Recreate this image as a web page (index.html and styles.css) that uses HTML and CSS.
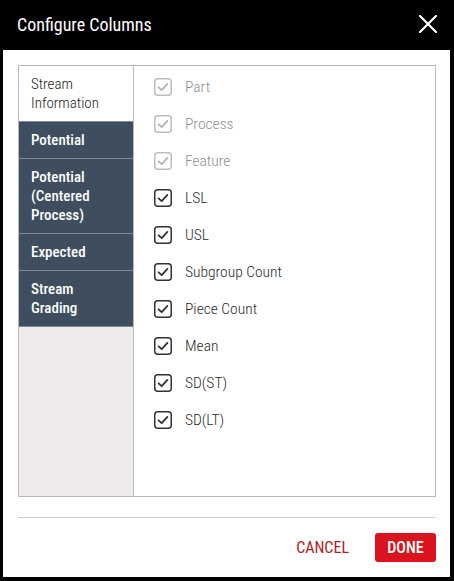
FILE: index.html
```html
<!DOCTYPE html>
<html>
<head>
<meta charset="utf-8">
<link rel="stylesheet" href="styles.css">
</head>
<body>
<div class="dialog">
  <div class="header">
    <div class="title">Configure Columns</div>
    <svg class="close" width="18" height="18" viewBox="0 0 18 18"><path d="M1 1 L17 17 M17 1 L1 17" stroke="#fff" stroke-width="2.2" stroke-linecap="square"/></svg>
  </div>
  <div class="body">
    <div class="panel">
      <div class="sidebar">
        <div class="tab active">Stream<br>Information</div>
        <div class="tab">Potential</div>
        <div class="tab">Potential<br>(Centered<br>Process)</div>
        <div class="tab">Expected</div>
        <div class="tab">Stream<br>Grading</div>
      </div>
      <div class="content">
        <div class="row disabled"><svg class="cb" width="18" height="18" viewBox="0 0 18 18"><rect x="0.75" y="0.75" width="16.5" height="16.5" rx="3"/><path d="M4.6 9.3 L7.7 12.2 L13.4 5.9"/></svg><span>Part</span></div>
        <div class="row disabled"><svg class="cb" width="18" height="18" viewBox="0 0 18 18"><rect x="0.75" y="0.75" width="16.5" height="16.5" rx="3"/><path d="M4.6 9.3 L7.7 12.2 L13.4 5.9"/></svg><span>Process</span></div>
        <div class="row disabled"><svg class="cb" width="18" height="18" viewBox="0 0 18 18"><rect x="0.75" y="0.75" width="16.5" height="16.5" rx="3"/><path d="M4.6 9.3 L7.7 12.2 L13.4 5.9"/></svg><span>Feature</span></div>
        <div class="row"><svg class="cb" width="18" height="18" viewBox="0 0 18 18"><rect x="0.75" y="0.75" width="16.5" height="16.5" rx="3"/><path d="M4.6 9.3 L7.7 12.2 L13.4 5.9"/></svg><span>LSL</span></div>
        <div class="row"><svg class="cb" width="18" height="18" viewBox="0 0 18 18"><rect x="0.75" y="0.75" width="16.5" height="16.5" rx="3"/><path d="M4.6 9.3 L7.7 12.2 L13.4 5.9"/></svg><span>USL</span></div>
        <div class="row"><svg class="cb" width="18" height="18" viewBox="0 0 18 18"><rect x="0.75" y="0.75" width="16.5" height="16.5" rx="3"/><path d="M4.6 9.3 L7.7 12.2 L13.4 5.9"/></svg><span>Subgroup Count</span></div>
        <div class="row"><svg class="cb" width="18" height="18" viewBox="0 0 18 18"><rect x="0.75" y="0.75" width="16.5" height="16.5" rx="3"/><path d="M4.6 9.3 L7.7 12.2 L13.4 5.9"/></svg><span>Piece Count</span></div>
        <div class="row"><svg class="cb" width="18" height="18" viewBox="0 0 18 18"><rect x="0.75" y="0.75" width="16.5" height="16.5" rx="3"/><path d="M4.6 9.3 L7.7 12.2 L13.4 5.9"/></svg><span>Mean</span></div>
        <div class="row"><svg class="cb" width="18" height="18" viewBox="0 0 18 18"><rect x="0.75" y="0.75" width="16.5" height="16.5" rx="3"/><path d="M4.6 9.3 L7.7 12.2 L13.4 5.9"/></svg><span>SD(ST)</span></div>
        <div class="row"><svg class="cb" width="18" height="18" viewBox="0 0 18 18"><rect x="0.75" y="0.75" width="16.5" height="16.5" rx="3"/><path d="M4.6 9.3 L7.7 12.2 L13.4 5.9"/></svg><span>SD(LT)</span></div>
      </div>
    </div>
    <div class="footer">
      <button class="btn cancel">CANCEL</button>
      <button class="btn done">DONE</button>
    </div>
  </div>
</div>
</body>
</html>
```
FILE: styles.css
```css
html, body {
  margin: 0;
  padding: 0;
  background: #000;
}
.dialog {
  width: 454px;
  height: 581px;
  box-sizing: border-box;
  padding: 0 4px 4px 3px;
  display: flex;
  flex-direction: column;
  font-family: Roboto, "Liberation Sans", sans-serif;
  font-stretch: 85%;
}
.header {
  height: 50px;
  flex: none;
  display: flex;
  align-items: center;
  justify-content: space-between;
  padding: 0 13px 2px 14px;
  box-sizing: border-box;
}
.title {
  color: #fff;
  font-size: 18px;
  font-weight: 380;
}
.close {
  display: block;
}
.body {
  flex: 1;
  background: #fff;
  padding: 15px 14px 0 15px;
  display: flex;
  flex-direction: column;
}
.panel {
  height: 432px;
  box-sizing: border-box;
  border: 1px solid #b9b9b9;
  display: flex;
}
.sidebar {
  width: 114px;
  background: #efebea;
  flex: none;
}
.tab {
  background: #3e4e5e;
  color: #fff;
  font-size: 15px;
  font-weight: 470;
  line-height: 19px;
  padding: 8.5px 12px;
  border-bottom: 1px solid #7d8a97;
}
.tab.active {
  background: #fff;
  color: #222;
  font-weight: 350;
}
.content {
  flex: 1;
  border-left: 1px solid #b9b9b9;
  padding: 2px 0 0 20px;
}
.row {
  height: 37px;
  display: flex;
  align-items: center;
  gap: 13px;
  font-size: 15.5px;
  font-weight: 350;
  color: #2a2a2a;
}
.cb {
  display: block;
  flex: none;
}
.cb rect {
  fill: #fff;
  stroke: #333;
  stroke-width: 1.5;
}
.cb path {
  fill: none;
  stroke: #333;
  stroke-width: 1.8;
  stroke-linecap: round;
  stroke-linejoin: round;
}
.row.disabled {
  color: #8f8f8f;
}
.row.disabled .cb rect {
  stroke: #bdbdbd;
}
.row.disabled .cb path {
  stroke: #b3b3b3;
}
.footer {
  margin-top: 20px;
  border-top: 1px solid #cfcfcf;
  padding-top: 15px;
  display: flex;
  justify-content: flex-end;
  align-items: center;
  gap: 18px;
}
.btn {
  font-family: Roboto, "Liberation Sans", sans-serif;
  font-stretch: 85%;
  font-size: 16px;
  border: none;
  background: none;
  height: 29px;
  padding: 0 8px;
  cursor: pointer;
}
.cancel {
  color: #b0232a;
  font-weight: 400;
}
.done {
  background: #d9141e;
  color: #fff;
  font-weight: 500;
  border-radius: 3px;
  width: 61px;
  padding: 0;
}
```
